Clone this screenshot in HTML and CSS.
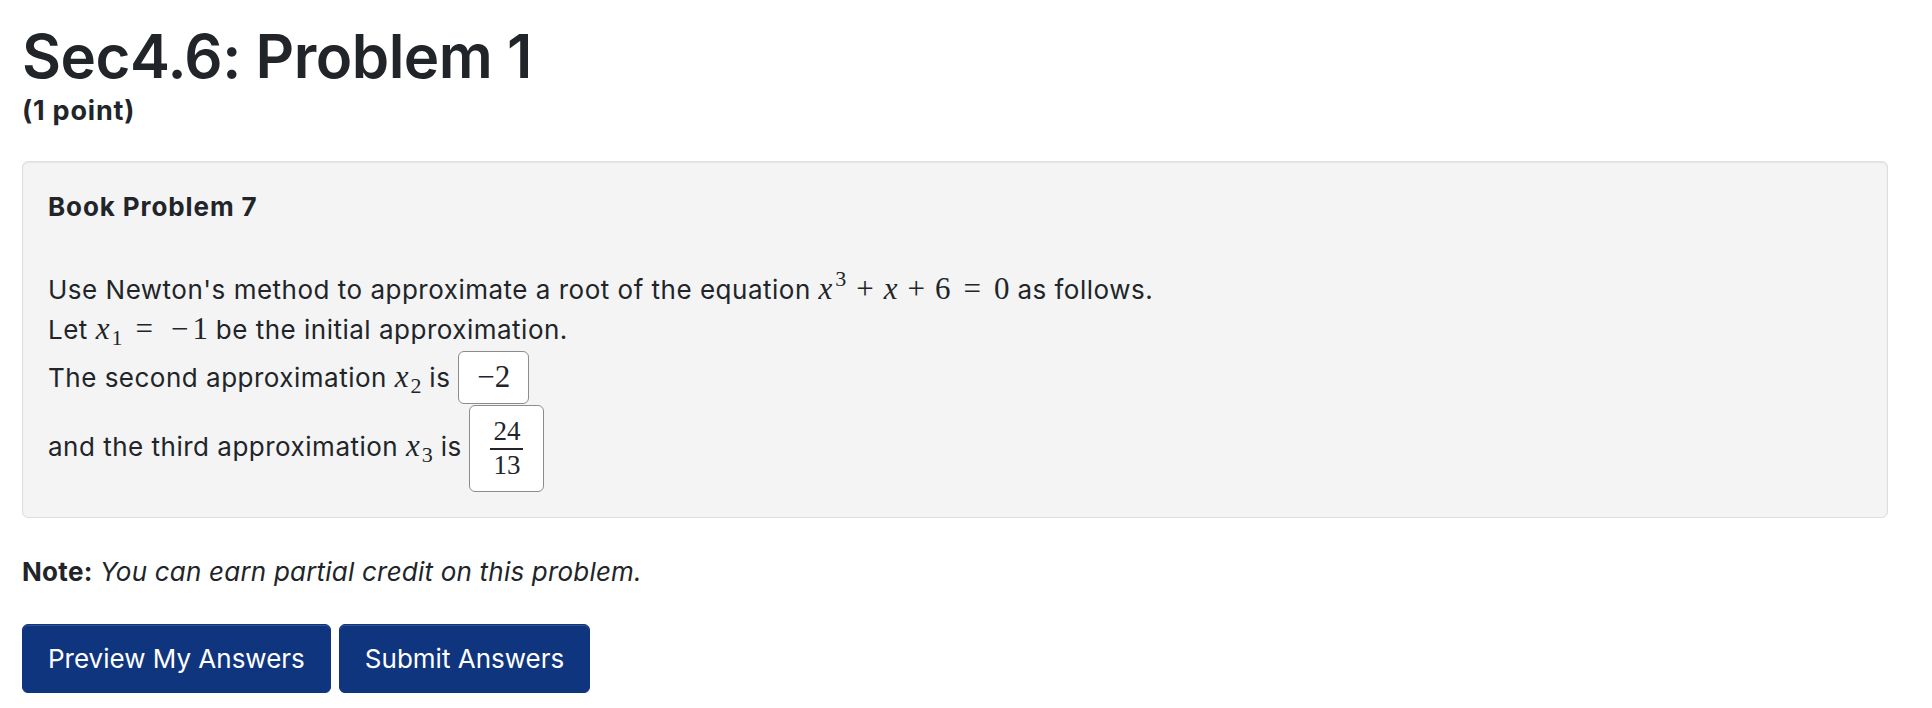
FILE: index.html
```html
<!DOCTYPE html>
<html lang="en">
<head>
<meta charset="utf-8">
<title>Sec4.6: Problem 1</title>
<link rel="stylesheet" href="styles.css">
</head>
<body>
<main class="page">
  <h1 class="title">Sec4.6: Problem 1</h1>
  <div class="points">(1 point)</div>

  <section class="problem">
    <div class="problem-heading">Book Problem 7</div>
    <div class="problem-body">
      <div class="line">Use Newton's method to approximate a root of the equation <span class="math"><span class="mi">x</span><sup class="sup">3</sup><span class="mo bin">+</span><span class="mi">x</span><span class="mo bin">+</span><span class="mn">6</span><span class="mo rel">=</span><span class="mn">0</span></span> as follows.</div>
      <div class="line">Let <span class="math"><span class="mi">x</span><sub class="sub">1</sub><span class="mo rel">=</span><span class="mo neg">−</span><span class="mn">1</span></span> be the initial approximation.</div>
      <div class="line">The second approximation <span class="math"><span class="mi">x</span><sub class="sub">2</sub></span> is <span class="ans ans-simple"><span class="mn">−2</span></span></div>
      <div class="line">and the third approximation <span class="math"><span class="mi">x</span><sub class="sub">3</sub></span> is <span class="ans ans-frac"><span class="num">24</span><span class="bar"></span><span class="den">13</span></span></div>
    </div>
  </section>

  <p class="note"><b>Note:</b> <i>You can earn partial credit on this problem.</i></p>

  <div class="actions">
    <button class="btn" type="button">Preview My Answers</button>
    <button class="btn" type="button">Submit Answers</button>
  </div>
</main>
</body>
</html>
```

FILE: styles.css
```css
html, body {
  margin: 0;
  padding: 0;
  background: #ffffff;
}

body {
  font-family: Inter, "Noto Sans", "Liberation Sans", sans-serif;
  color: #212529;
  font-size: 26px;
  line-height: 39px;
}

.page {
  padding: 0 44px 0 22px;
}

.title {
  margin: 20px 0 0;
  font-size: 60px;
  line-height: 72px;
  font-weight: 600;
  letter-spacing: -0.5px;
}

.points {
  margin-top: 5px;
  font-size: 27px;
  line-height: 28px;
  font-weight: 700;
  letter-spacing: 0.8px;
}

.problem {
  margin-top: 36px;
  background: #f4f4f4;
  border: 1px solid #dedede;
  border-radius: 6px;
  box-shadow: inset 0 1px 2px rgba(0, 0, 0, 0.06);
  padding: 25px;
}

.problem-heading {
  font-weight: 700;
  letter-spacing: 0.9px;
}

.problem-body {
  margin-top: 43px;
  letter-spacing: 0.5px;
}

.math {
  font-family: "Liberation Serif", "DejaVu Serif", serif;
  font-size: 31px;
  letter-spacing: 0;
  white-space: nowrap;
}

.mi {
  font-style: italic;
}

.sup, .sub {
  font-size: 22px;
  line-height: 0;
  font-family: "Liberation Serif", "DejaVu Serif", serif;
}

.sup {
  vertical-align: 13px;
  margin-left: 3px;
}

.sub {
  vertical-align: -6px;
  margin-left: 2px;
}

.mo.bin {
  margin: 0 10px;
}

.mo.rel {
  margin: 0 13px;
}

.mo.neg {
  margin: 0 4px 0 5px;
}

.ans {
  display: inline-block;
  background: #ffffff;
  border: 1px solid #8c8c8c;
  border-radius: 6px;
  font-family: "Liberation Serif", "DejaVu Serif", serif;
  letter-spacing: 0;
}

.ans-simple {
  font-size: 31px;
  line-height: 49px;
  padding: 0 18px 2px;
  margin: 2px 0 1px;
}

.ans-frac {
  font-size: 27px;
  line-height: 27px;
  padding: 12px 20px;
  vertical-align: -18px;
  text-align: center;
}

.num, .den, .bar {
  display: block;
}

.bar {
  width: 33px;
  height: 2px;
  margin-top: 3px;
  background: #212529;
}

.den {
  margin-top: 2px;
}

.note {
  margin: 34px 0 0;
}

.note b {
  letter-spacing: 0.3px;
}

.note i {
  font-style: italic;
  letter-spacing: 0.2px;
}

.actions {
  display: flex;
  gap: 8px;
  margin-top: 33px;
}

.btn {
  font-family: Inter, "Noto Sans", "Liberation Sans", sans-serif;
  font-size: 26px;
  line-height: 39px;
  color: #ffffff;
  background: #10357f;
  border: 1px solid #10357f;
  border-radius: 6px;
  padding: 14px 25px;
  box-shadow: inset 0 1px 0 rgba(255, 255, 255, 0.15), 0 1px 1px rgba(0, 0, 0, 0.075);
  cursor: pointer;
}
```
